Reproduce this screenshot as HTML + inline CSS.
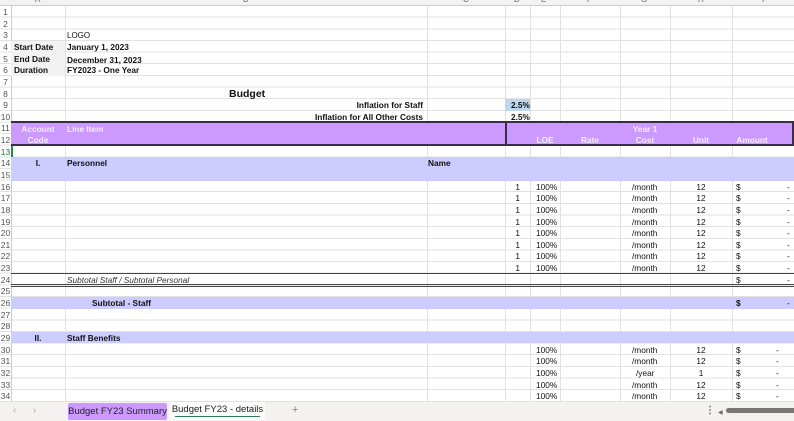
<!DOCTYPE html>
<html><head><meta charset="utf-8"><style>
*{margin:0;padding:0;box-sizing:border-box}
body{width:794px;height:421px;overflow:hidden;background:#fff;font-family:"Liberation Sans",Arial,sans-serif;font-size:8.3px;color:#111;position:relative}
.a{position:absolute}
.t{position:absolute;height:11.64px;line-height:13px;white-space:nowrap}
.b{font-weight:bold}
.r{text-align:right}
.c{text-align:center}
.rn{position:absolute;left:0;width:11px;text-align:center;color:#555;font-size:8.5px;height:11.64px;line-height:12.5px}
.vl{position:absolute;top:0;width:1px;height:402px;background:#e2e2e2}
#grid{position:absolute;left:0;top:6px;width:794px;height:396px;background:repeating-linear-gradient(to bottom,transparent 0,transparent 10.64px,#e2e2e2 10.64px,#e2e2e2 11.64px)}
.band{position:absolute;left:11px;width:783px;background:#ccccff}
.w{color:#f4ecff}
</style></head><body>
<div id="grid"></div>
<div class="vl" style="left:11px;background:#ccc"></div>
<div class="vl" style="left:65px"></div>
<div class="vl" style="left:427px"></div>
<div class="vl" style="left:505px"></div>
<div class="vl" style="left:530px"></div>
<div class="vl" style="left:560px"></div>
<div class="vl" style="left:620px"></div>
<div class="vl" style="left:670px"></div>
<div class="vl" style="left:732px"></div>
<div class="a" style="left:0;top:0;width:794px;height:6px;background:#f2f2f2;border-bottom:1px solid #ccc;overflow:hidden;color:#666;font-size:8px;line-height:0px">
<span class="a" style="left:35px;top:0">A</span><span class="a" style="left:243px;top:0">B</span><span class="a" style="left:463px;top:0">C</span><span class="a" style="left:514px;top:0">D</span><span class="a" style="left:541px;top:0">E</span><span class="a" style="left:587px;top:0">F</span><span class="a" style="left:641px;top:0">G</span><span class="a" style="left:698px;top:0">H</span><span class="a" style="left:762px;top:0">I</span></div>
<div class="a" style="left:11px;top:40.9px;width:54px;height:34.9px;background:#f2f2f2"></div>
<div class="a" style="left:505px;top:99.1px;width:25px;height:11.64px;background:#bdd7ee"></div>
<div class="a" style="left:11px;top:121.4px;width:783px;height:24.3px;background:#cc99ff;border-top:2px solid #3b2c4a;border-bottom:2px solid #3b2c4a;border-right:2px solid #3b2c4a"></div>
<div class="a" style="left:505px;top:122px;width:1.5px;height:23px;background:#3b2c4a"></div>
<div class="a" style="left:11px;top:145.7px;width:2px;height:11.6px;background:#2a8a4a"></div>
<div class="band" style="top:157.3px;height:23.3px"></div>
<div class="band" style="top:297px;height:11.6px"></div>
<div class="band" style="top:331.9px;height:11.6px"></div>
<div class="a" style="left:11px;top:273.3px;width:783px;height:1.2px;background:#444"></div>
<div class="a" style="left:11px;top:284.4px;width:783px;height:3px;border-top:1px solid #444;border-bottom:1px solid #444"></div>
<div class="rn" style="top:6px">1</div><div class="rn" style="top:17.6px">2</div><div class="rn" style="top:29.3px">3</div><div class="rn" style="top:40.9px">4</div><div class="rn" style="top:52.6px">5</div><div class="rn" style="top:64.2px">6</div><div class="rn" style="top:75.8px">7</div><div class="rn" style="top:87.5px">8</div><div class="rn" style="top:99.1px">9</div><div class="rn" style="top:110.8px">10</div><div class="rn" style="top:122.4px">11</div><div class="rn" style="top:134px">12</div><div class="rn" style="top:145.7px;color:#1a7a3a">13</div><div class="rn" style="top:157.3px">14</div><div class="rn" style="top:169px">15</div><div class="rn" style="top:180.6px">16</div><div class="rn" style="top:192.2px">17</div><div class="rn" style="top:203.9px">18</div><div class="rn" style="top:215.5px">19</div><div class="rn" style="top:227.2px">20</div><div class="rn" style="top:238.8px">21</div><div class="rn" style="top:250.4px">22</div><div class="rn" style="top:262.1px">23</div><div class="rn" style="top:273.7px">24</div><div class="rn" style="top:285.4px">25</div><div class="rn" style="top:297px">26</div><div class="rn" style="top:308.6px">27</div><div class="rn" style="top:320.3px">28</div><div class="rn" style="top:331.9px">29</div><div class="rn" style="top:343.6px">30</div><div class="rn" style="top:355.2px">31</div><div class="rn" style="top:366.8px">32</div><div class="rn" style="top:378.5px">33</div><div class="rn" style="top:390.1px">34</div>
<div class="t" style="left:67px;top:29.3px;font-size:8px">LOGO</div>
<div class="t b" style="left:14px;top:40.9px">Start Date</div><div class="t b" style="left:67px;top:40.9px">January 1, 2023</div>
<div class="t b" style="left:14px;top:52.6px">End Date</div><div class="t b" style="left:67px;top:53.6px">December 31, 2023</div>
<div class="t b" style="left:14px;top:64.2px">Duration</div><div class="t b" style="left:67px;top:64.2px">FY2023 - One Year</div>
<div class="t b" style="left:229px;top:88px;font-size:10.5px">Budget</div>
<div class="t b r" style="left:200px;width:223px;top:99.1px">Inflation for Staff</div>
<div class="t b r" style="left:200px;width:223px;top:110.8px">Inflation for All Other Costs</div>
<div class="t b" style="left:511px;top:99.1px">2.5%</div><div class="t b" style="left:511px;top:110.8px">2.5%</div>
<div class="t b w c" style="left:11px;width:54px;top:123px">Account</div>
<div class="t b w c" style="left:11px;width:54px;top:133.5px">Code</div>
<div class="t b w" style="left:67px;top:123px">Line Item</div>
<div class="t b w c" style="left:620px;width:50px;top:123px">Year 1</div>
<div class="t b w c" style="left:530px;width:30px;top:133.5px">LOE</div>
<div class="t b w c" style="left:560px;width:60px;top:133.5px">Rate</div>
<div class="t b w c" style="left:620px;width:50px;top:133.5px">Cost</div>
<div class="t b w c" style="left:670px;width:62px;top:133.5px">Unit</div>
<div class="t b w c" style="left:732px;width:40px;top:133.5px">Amount</div>
<div class="t b c" style="left:11px;width:54px;top:157.3px">I.</div>
<div class="t b" style="left:67px;top:157.3px">Personnel</div>
<div class="t b" style="left:428px;top:157.3px">Name</div>
<div class="a" style="left:0;top:180.6px">
<div class="t r" style="left:505px;width:15px;top:0">1</div><div class="t" style="left:536px;top:0">100%</div><div class="t" style="left:632px;top:0">/month</div><div class="t c" style="left:670px;width:62px;top:0">12</div><div class="t" style="left:736px;top:0">$</div><div class="t" style="left:787px;top:0">-</div>
<div class="t r" style="left:505px;width:15px;top:11.64px">1</div><div class="t" style="left:536px;top:11.64px">100%</div><div class="t" style="left:632px;top:11.64px">/month</div><div class="t c" style="left:670px;width:62px;top:11.64px">12</div><div class="t" style="left:736px;top:11.64px">$</div><div class="t" style="left:787px;top:11.64px">-</div>
<div class="t r" style="left:505px;width:15px;top:23.28px">1</div><div class="t" style="left:536px;top:23.28px">100%</div><div class="t" style="left:632px;top:23.28px">/month</div><div class="t c" style="left:670px;width:62px;top:23.28px">12</div><div class="t" style="left:736px;top:23.28px">$</div><div class="t" style="left:787px;top:23.28px">-</div>
<div class="t r" style="left:505px;width:15px;top:34.92px">1</div><div class="t" style="left:536px;top:34.92px">100%</div><div class="t" style="left:632px;top:34.92px">/month</div><div class="t c" style="left:670px;width:62px;top:34.92px">12</div><div class="t" style="left:736px;top:34.92px">$</div><div class="t" style="left:787px;top:34.92px">-</div>
<div class="t r" style="left:505px;width:15px;top:46.56px">1</div><div class="t" style="left:536px;top:46.56px">100%</div><div class="t" style="left:632px;top:46.56px">/month</div><div class="t c" style="left:670px;width:62px;top:46.56px">12</div><div class="t" style="left:736px;top:46.56px">$</div><div class="t" style="left:787px;top:46.56px">-</div>
<div class="t r" style="left:505px;width:15px;top:58.2px">1</div><div class="t" style="left:536px;top:58.2px">100%</div><div class="t" style="left:632px;top:58.2px">/month</div><div class="t c" style="left:670px;width:62px;top:58.2px">12</div><div class="t" style="left:736px;top:58.2px">$</div><div class="t" style="left:787px;top:58.2px">-</div>
<div class="t r" style="left:505px;width:15px;top:69.84px">1</div><div class="t" style="left:536px;top:69.84px">100%</div><div class="t" style="left:632px;top:69.84px">/month</div><div class="t c" style="left:670px;width:62px;top:69.84px">12</div><div class="t" style="left:736px;top:69.84px">$</div><div class="t" style="left:787px;top:69.84px">-</div>
<div class="t r" style="left:505px;width:15px;top:81.48px">1</div><div class="t" style="left:536px;top:81.48px">100%</div><div class="t" style="left:632px;top:81.48px">/month</div><div class="t c" style="left:670px;width:62px;top:81.48px">12</div><div class="t" style="left:736px;top:81.48px">$</div><div class="t" style="left:787px;top:81.48px">-</div>
</div>
<div class="t" style="left:67px;top:273.7px;font-style:italic;color:#333">Subtotal Staff / Subtotal Personal</div>
<div class="t" style="left:736px;top:273.7px">$</div><div class="t" style="left:787px;top:273.7px">-</div>
<div class="t b" style="left:92px;top:297px">Subtotal - Staff</div>
<div class="t b" style="left:736px;top:297px">$</div><div class="t" style="left:787px;top:297px">-</div>
<div class="t b c" style="left:11px;width:54px;top:331.9px">II.</div>
<div class="t b" style="left:67px;top:331.9px">Staff Benefits</div>
<div class="a" style="left:0;top:343.6px">
<div class="t" style="left:536px;top:0">100%</div><div class="t" style="left:632px;top:0">/month</div><div class="t c" style="left:670px;width:62px;top:0">12</div><div class="t" style="left:736px;top:0">$</div><div class="t" style="left:776px;top:0">-</div>
<div class="t" style="left:536px;top:11.64px">100%</div><div class="t" style="left:632px;top:11.64px">/month</div><div class="t c" style="left:670px;width:62px;top:11.64px">12</div><div class="t" style="left:736px;top:11.64px">$</div><div class="t" style="left:776px;top:11.64px">-</div>
<div class="t" style="left:536px;top:23.28px">100%</div><div class="t" style="left:636px;top:23.28px">/year</div><div class="t c" style="left:670px;width:62px;top:23.28px">1</div><div class="t" style="left:736px;top:23.28px">$</div><div class="t" style="left:776px;top:23.28px">-</div>
<div class="t" style="left:536px;top:34.92px">100%</div><div class="t" style="left:632px;top:34.92px">/month</div><div class="t c" style="left:670px;width:62px;top:34.92px">12</div><div class="t" style="left:736px;top:34.92px">$</div><div class="t" style="left:776px;top:34.92px">-</div>
<div class="t" style="left:536px;top:46.56px">100%</div><div class="t" style="left:632px;top:46.56px">/month</div><div class="t c" style="left:670px;width:62px;top:46.56px">12</div><div class="t" style="left:736px;top:46.56px">$</div><div class="t" style="left:776px;top:46.56px">-</div>
</div>
<div class="a" style="left:0;top:401.8px;width:794px;height:19.2px;background:#f3f2f1">
<div class="a" style="left:13px;top:3px;color:#aaa;font-size:10px">&#8249;</div>
<div class="a" style="left:33px;top:3px;color:#aaa;font-size:10px">&#8250;</div>
<div class="a" style="left:68px;top:1.5px;width:99px;height:17px;background:#cc99ff;border-radius:2px;font-size:9.5px;line-height:17px;text-align:center;color:#222">Budget FY23 Summary</div>
<div class="a" style="left:170px;top:0;width:95px;height:18px;background:#fbfbfb;font-size:9.5px;line-height:16px;text-align:center;color:#222">Budget FY23 - details<div class="a" style="left:5px;top:14px;width:85px;height:1.5px;background:#2f7a5a"></div></div>
<div class="a" style="left:292px;top:2px;color:#888;font-size:11px">+</div>
<div class="a" style="left:705px;top:3px;color:#666;font-size:10px;font-weight:bold">&#8942;</div>
<div class="a" style="left:718px;top:7px;color:#666;font-size:6px">&#9664;</div>
<div class="a" style="left:726px;top:6px;width:70px;height:5px;background:#777;border-radius:3px"></div>
</div>
</body></html>
